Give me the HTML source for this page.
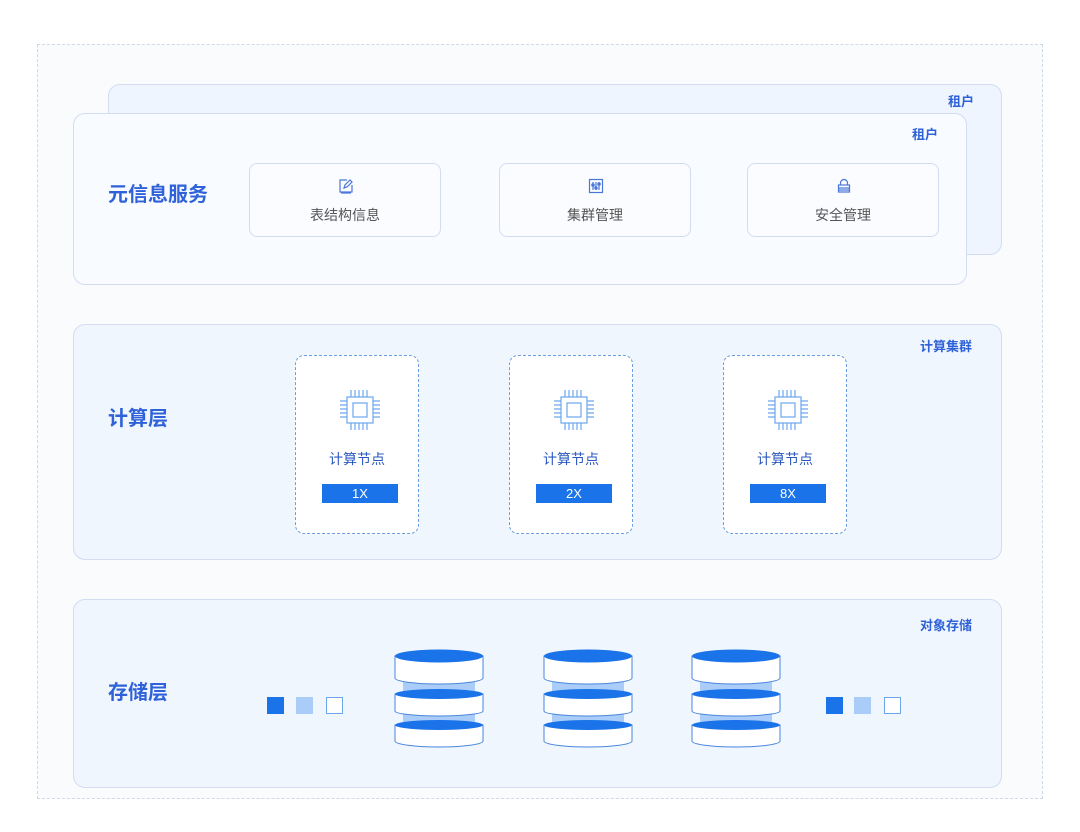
<!DOCTYPE html>
<html><head><meta charset="utf-8"><style>
*{margin:0;padding:0;box-sizing:border-box}
body{width:1080px;height:832px;background:#fff;position:relative;font-family:"Liberation Sans","Noto Sans CJK SC",sans-serif;overflow:hidden}
.a{position:absolute}
.outer{left:37px;top:44px;width:1006px;height:755px;border:1px dashed #cfd9e8;background:#fafbfd}
.card{border:1px solid #d3dcf0;border-radius:12px}
.title{font-size:20px;font-weight:bold;color:#2f62d8}
.tag{font-size:13px;font-weight:bold;color:#2f62d8}
.svc{width:192px;height:74px;border:1px solid #d3dcf0;border-radius:8px;background:#fafcff;text-align:center;font-size:14px;color:#555}
.svc .t{position:absolute;left:0;right:0;top:41px}
.svc svg{position:absolute;left:88px;top:14px}
.node{width:124px;height:179px;border:1px dashed #6a9ee0;border-radius:9px;background:#fff;text-align:center}
.node .t{position:absolute;left:0;right:0;top:93px;font-size:14px;color:#2b58c0}
.node .b{position:absolute;left:26px;top:128px;width:76px;height:19px;background:#1a73e8;color:#fff;font-size:13px;line-height:19px}
.node svg{position:absolute;left:42px;top:32px}
.sq{width:17px;height:17px}
</style></head><body>
<div class="a outer"></div>
<div class="a card" style="left:108px;top:84px;width:894px;height:171px;background:#eef5fe"></div>
<div class="a tag" style="left:948px;top:91px">租户</div>
<div class="a card" style="left:73px;top:113px;width:894px;height:172px;background:#f8fbff"></div>
<div class="a tag" style="left:912px;top:124px">租户</div>
<div class="a title" style="left:108px;top:178px">元信息服务</div>
<div class="a svc" style="left:249px;top:163px"><svg width="16" height="16" viewBox="0 0 16 16" fill="none" stroke="#4a78d8" stroke-width="1.2"><path d="M9 2H2v12h12V7"/><path d="M6 10l1-3 5-5 2 2-5 5z"/><path d="M3 15h10"/></svg><div class="t">表结构信息</div></div>
<div class="a svc" style="left:499px;top:163px"><svg width="16" height="16" viewBox="0 0 16 16" fill="none" stroke="#4a78d8" stroke-width="1.2"><rect x="1.5" y="1.5" width="13" height="13"/><path d="M5 4v8M8 4v8M11 4v8"/><circle cx="5" cy="7" r="1.2"/><circle cx="8" cy="10" r="1.2"/><circle cx="11" cy="6" r="1.2"/></svg><div class="t">集群管理</div></div>
<div class="a svc" style="left:747px;top:163px"><svg width="16" height="16" viewBox="0 0 16 16" fill="none" stroke="#4a78d8" stroke-width="1.2"><path d="M4.5 7V5a3.5 3.5 0 0 1 7 0v2"/><rect x="2.5" y="7" width="11" height="7"/><path d="M3 10h10M3 12h10"/></svg><div class="t">安全管理</div></div>

<div class="a card" style="left:73px;top:324px;width:929px;height:236px;background:#eff6fe"></div>
<div class="a tag" style="left:920px;top:336px">计算集群</div>
<div class="a title" style="left:108px;top:402px">计算层</div>

<div class="a node" style="left:295px;top:355px"><svg width="44" height="44" viewBox="0 0 44 44" fill="none" stroke="#6aa6ec" stroke-width="1.2"><rect x="9" y="9" width="26" height="26"/><rect x="15" y="15" width="14" height="14"/><path d="M13 2v7M17 2v7M21 2v7M25 2v7M29 2v7M13 35v7M17 35v7M21 35v7M25 35v7M29 35v7M2 13h7M2 17h7M2 21h7M2 25h7M2 29h7M35 13h7M35 17h7M35 21h7M35 25h7M35 29h7"/></svg><div class="t">计算节点</div><div class="b">1X</div></div>
<div class="a node" style="left:509px;top:355px"><svg width="44" height="44" viewBox="0 0 44 44" fill="none" stroke="#6aa6ec" stroke-width="1.2"><rect x="9" y="9" width="26" height="26"/><rect x="15" y="15" width="14" height="14"/><path d="M13 2v7M17 2v7M21 2v7M25 2v7M29 2v7M13 35v7M17 35v7M21 35v7M25 35v7M29 35v7M2 13h7M2 17h7M2 21h7M2 25h7M2 29h7M35 13h7M35 17h7M35 21h7M35 25h7M35 29h7"/></svg><div class="t">计算节点</div><div class="b">2X</div></div>
<div class="a node" style="left:723px;top:355px"><svg width="44" height="44" viewBox="0 0 44 44" fill="none" stroke="#6aa6ec" stroke-width="1.2"><rect x="9" y="9" width="26" height="26"/><rect x="15" y="15" width="14" height="14"/><path d="M13 2v7M17 2v7M21 2v7M25 2v7M29 2v7M13 35v7M17 35v7M21 35v7M25 35v7M29 35v7M2 13h7M2 17h7M2 21h7M2 25h7M2 29h7M35 13h7M35 17h7M35 21h7M35 25h7M35 29h7"/></svg><div class="t">计算节点</div><div class="b">8X</div></div>

<div class="a card" style="left:73px;top:599px;width:929px;height:189px;background:#eff6fe"></div>
<div class="a tag" style="left:920px;top:615px">对象存储</div>
<div class="a title" style="left:108px;top:676px">存储层</div>
<div class="a sq" style="left:267px;top:697px;background:#1a73e8"></div>
<div class="a sq" style="left:296px;top:697px;background:#a9cdf8"></div>
<div class="a sq" style="left:326px;top:697px;background:#fff;border:1px solid #6aa6ec"></div>
<div class="a sq" style="left:826px;top:697px;background:#1a73e8"></div>
<div class="a sq" style="left:854px;top:697px;background:#a9cdf8"></div>
<div class="a sq" style="left:884px;top:697px;background:#fff;border:1px solid #6aa6ec"></div>

<svg class="a" style="left:0;top:0" width="1080" height="832">
<defs><g id="stk" stroke="#4a86dc" stroke-width="1">
<rect x="9" y="28" width="72" height="16" fill="#a9cdf8" stroke="none"/>
<rect x="9" y="62" width="72" height="16" fill="#a9cdf8" stroke="none"/>
<path d="M1 76v16a44 6 0 0 0 88 0V76z" fill="#fff"/><ellipse cx="45" cy="76" rx="44" ry="5" fill="#1a73e8" stroke="none"/>
<path d="M1 45v17a44 5 0 0 0 88 0V45z" fill="#fff"/><ellipse cx="45" cy="45" rx="44" ry="5" fill="#1a73e8" stroke="none"/>
<path d="M1 7v22a44 6 0 0 0 88 0V7z" fill="#fff"/><ellipse cx="45" cy="7" rx="44" ry="6.5" fill="#1a73e8" stroke="none"/>
</g></defs>
<use href="#stk" x="394" y="649"/><use href="#stk" x="543" y="649"/><use href="#stk" x="691" y="649"/>
</svg>
</body></html>
